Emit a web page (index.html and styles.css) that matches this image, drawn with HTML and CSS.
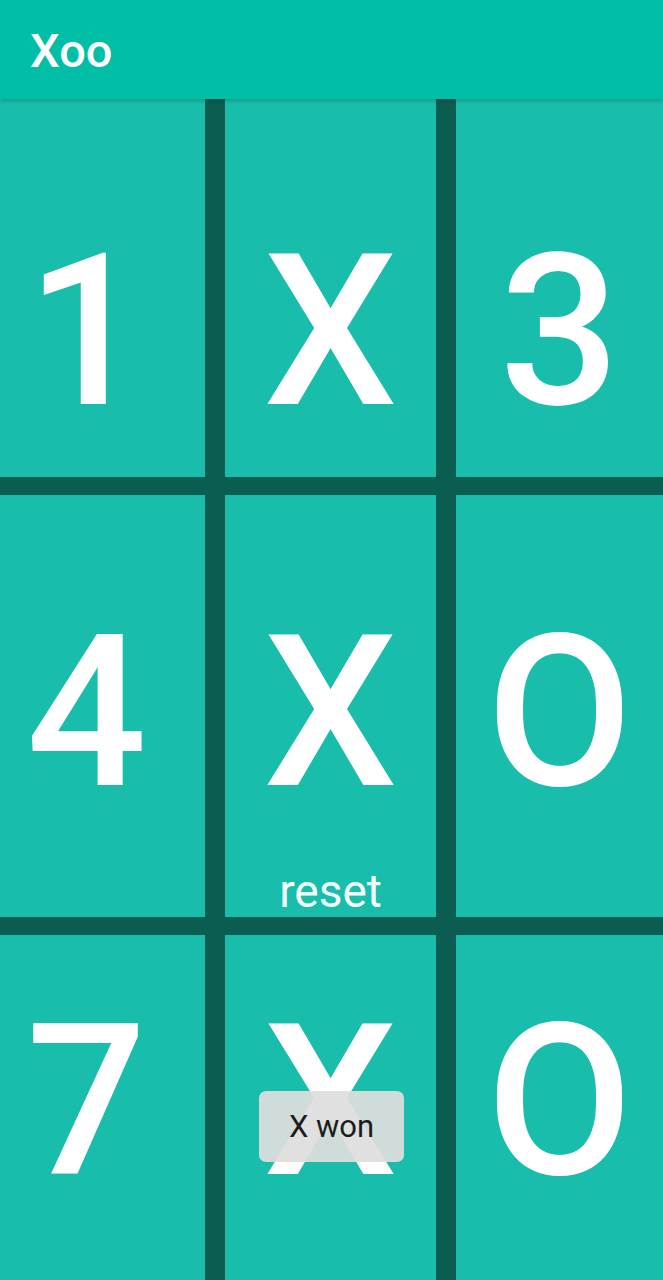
FILE: index.html
```html
<!DOCTYPE html>
<html lang="en">
<head>
<meta charset="utf-8">
<title>Xoo</title>
<link rel="stylesheet" href="styles.css">
</head>
<body>
<div class="app">
  <header class="appbar"><span class="title">Xoo</span></header>
  <main class="board">
    <div class="cell r1 first"><span class="mark">1</span></div>
    <div class="cell r1"><span class="mark">X</span></div>
    <div class="cell r1"><span class="mark">3</span></div>
    <div class="cell r2 first"><span class="mark">4</span></div>
    <div class="cell r2 center"><span class="mark">X</span><button class="reset">reset</button></div>
    <div class="cell r2"><span class="mark">O</span></div>
    <div class="cell r3 first"><span class="mark">7</span></div>
    <div class="cell r3"><span class="mark">X</span></div>
    <div class="cell r3"><span class="mark">O</span></div>
  </main>
  <div class="toast">X won</div>
</div>
</body>
</html>
```

FILE: styles.css
```css
html, body {
  margin: 0;
  padding: 0;
  width: 663px;
  height: 1280px;
  overflow: hidden;
  font-family: Roboto, "Noto Sans", sans-serif;
  background: #0b5c51;
}

.app {
  position: relative;
  width: 663px;
  height: 1280px;
  display: flex;
  flex-direction: column;
}

.appbar {
  height: 99px;
  flex: none;
  background: #00bfa6;
  display: flex;
  align-items: center;
  padding-left: 30px;
  box-shadow: 0 2px 4px rgba(0, 0, 0, 0.18);
  position: relative;
  z-index: 1;
}

.title {
  color: #ffffff;
  font-size: 47px;
  font-weight: 500;
  line-height: 1;
  margin-top: 2px;
}

.board {
  flex: 1;
  display: grid;
  grid-template-columns: 205px 211px 207px;
  grid-template-rows: 378px 422px 1fr;
  column-gap: 20px;
  row-gap: 18px;
  background: #0b5c51;
}

.cell {
  background: #19bdab;
  display: flex;
  flex-direction: column;
  align-items: center;
  box-sizing: border-box;
}

.first { padding-right: 32px; }

.mark {
  color: #ffffff;
  font-size: 212px;
  font-weight: 500;
  line-height: 1;
  display: block;
}

.r1 { padding-top: 127px; }
.r2 { padding-top: 112px; }
.r3 { padding-top: 61px; }

.center { padding-bottom: 3px; }

.reset {
  margin-top: auto;
  background: none;
  border: none;
  padding: 0;
  color: #f4fffd;
  font-family: Roboto, "Noto Sans", sans-serif;
  font-size: 46px;
  line-height: 1;
}

.toast {
  position: absolute;
  left: 259px;
  top: 1091px;
  width: 145px;
  height: 71px;
  border-radius: 7px;
  background: rgba(222, 222, 222, 0.93);
  color: #1c1c1c;
  font-size: 31px;
  display: flex;
  align-items: center;
  justify-content: center;
  z-index: 2;
}
```
